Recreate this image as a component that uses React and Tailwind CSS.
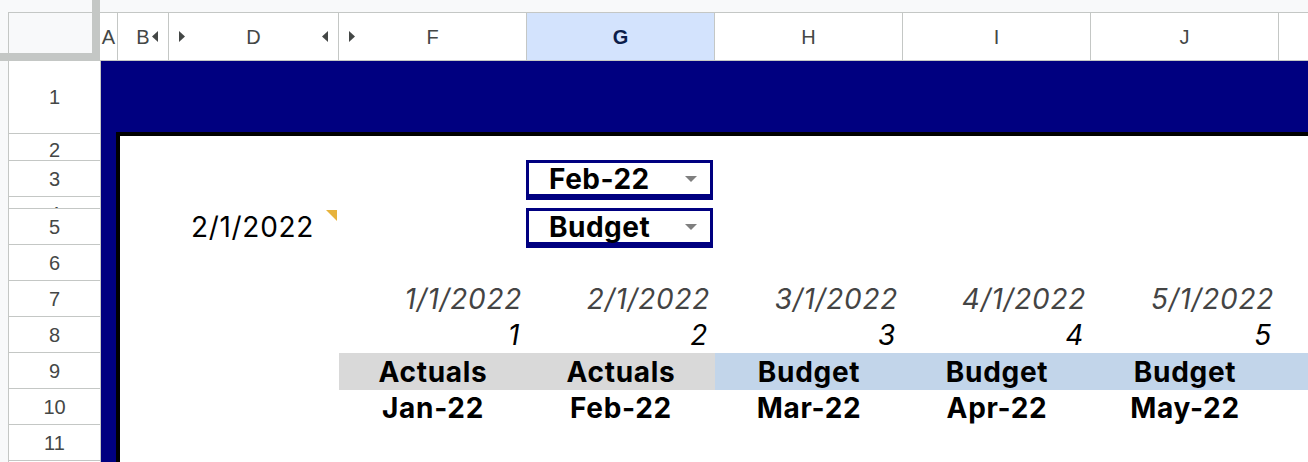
const cellFont = "font-['Inter','Noto_Sans',sans-serif]";
const headFont = "font-['Liberation_Sans',Arial,sans-serif]";

const colHeads = [
  { label: "A", w: "w-[18px]" },
  { label: "B", w: "w-[51px]", right: true },
  { label: "D", w: "w-[170px]", left: true, right: true },
  { label: "F", w: "w-[188px]", left: true },
  { label: "G", w: "w-[188px]", active: true },
  { label: "H", w: "w-[188px]" },
  { label: "I", w: "w-[188px]" },
  { label: "J", w: "w-[188px]" },
  { label: "", w: "w-[200px]" },
];

const rowHeads = [
  { label: "1", h: "h-[73px]" },
  { label: "2", h: "h-[27px]", pad: "pt-[6px]" },
  { label: "3", h: "h-[36px]" },
  { label: "4", h: "h-[12px]", clip: true },
  { label: "5", h: "h-[36px]" },
  { label: "6", h: "h-[36px]" },
  { label: "7", h: "h-[36px]" },
  { label: "8", h: "h-[36px]" },
  { label: "9", h: "h-[36px]" },
  { label: "10", h: "h-[36px]" },
  { label: "11", h: "h-[36px]" },
];

const months = [
  { date: "1/1/2022", n: 1, kind: "Actuals", mon: "Jan-22", bg: "bg-[#d9d9d9]" },
  { date: "2/1/2022", n: 2, kind: "Actuals", mon: "Feb-22", bg: "bg-[#d9d9d9]" },
  { date: "3/1/2022", n: 3, kind: "Budget", mon: "Mar-22", bg: "bg-[#c2d5ea]" },
  { date: "4/1/2022", n: 4, kind: "Budget", mon: "Apr-22", bg: "bg-[#c2d5ea]" },
  { date: "5/1/2022", n: 5, kind: "Budget", mon: "May-22", bg: "bg-[#c2d5ea]" },
];

function ArrowLeft({ className }) {
  return (
    <svg width="6" height="11" viewBox="0 0 6 11" className={className}>
      <polygon points="6,0 6,11 0,5.5" fill="#444746" />
    </svg>
  );
}

function ArrowRight({ className }) {
  return (
    <svg width="6" height="11" viewBox="0 0 6 11" className={className}>
      <polygon points="0,0 0,11 6,5.5" fill="#444746" />
    </svg>
  );
}

function Dropdown({ value }) {
  return (
    <div className="-mt-[1px] -ml-[1px] flex h-[40px] w-[187px] items-center border-x-[3px] border-t-[3px] border-b-[6px] border-[#000080] bg-white pl-[20px] pr-[13px]">
      <span className="text-[28px] font-bold leading-none tracking-[0.5px] text-black">{value}</span>
      <svg width="12" height="6" viewBox="0 0 12 6" className="ml-auto">
        <polygon points="0,0 12,0 6,6" fill="#7f7f7f" />
      </svg>
    </div>
  );
}

// widths of the visible columns inside the framed area: B (partial), D, F, G, H, I, J, K
const W = ["w-[49px]", "w-[170px]", "w-[188px]", "w-[188px]", "w-[188px]", "w-[188px]", "w-[188px]", "w-[200px]"];

function Row({ h, children }) {
  return <div className={`flex shrink-0 ${h}`}>{children}</div>;
}

export default function App() {
  return (
    <div className="h-[462px] w-[1308px] overflow-hidden bg-white">
      {/* top strip */}
      <div className="flex h-[13px]">
        <div className="w-[8px] bg-[#f8f9fa]" />
        <div className="w-[84px] border-b border-[#c4c7c5] bg-[#f8f9fa]" />
        <div className="w-[8px] bg-[#c4c7c5]" />
        <div className="flex-1 border-b border-[#c4c7c5] bg-[#f8f9fa]" />
      </div>

      {/* column headers */}
      <div className={`flex h-[48px] ${headFont}`}>
        <div className="flex w-[100px] shrink-0 flex-col">
          <div className="flex h-[40px]">
            <div className="w-[8px] bg-[#f8f9fa]" />
            <div className="w-[84px] border-l border-[#c4c7c5] bg-[#f8f9fa]" />
            <div className="w-[8px] bg-[#c4c7c5]" />
          </div>
          <div className="h-[8px] bg-[#c4c7c5]" />
        </div>
        {colHeads.map((c, i) => (
          <div
            key={i}
            className={`relative flex shrink-0 items-center justify-center border-r border-b border-[#c4c7c5] text-[20px] ${c.w} ${
              c.active ? "bg-[#d3e3fd] font-bold text-[#0b1d4a]" : "bg-white text-[#444746]"
            }`}
          >
            {c.label}
            {c.right && <ArrowLeft className="absolute right-[10px] top-[18px]" />}
            {c.left && <ArrowRight className="absolute left-[10px] top-[18px]" />}
          </div>
        ))}
      </div>

      {/* body */}
      <div className="flex h-[401px]">
        <div className="w-[8px] shrink-0 bg-[#f8f9fa]" />
        <div className={`flex w-[93px] shrink-0 flex-col border-x border-[#c4c7c5] bg-white ${headFont}`}>
          {rowHeads.map((r) => (
            <div
              key={r.label}
              className={`flex shrink-0 justify-center overflow-hidden border-b border-[#c4c7c5] text-[20px] text-[#444746] ${r.h} ${
                r.clip ? "items-start pt-[7px] leading-none" : "items-center"
              } ${r.pad || ""}`}
            >
              {r.label}
            </div>
          ))}
        </div>

        <div className="flex-1 bg-[#000080] pl-[15px] pt-[71px]">
          <div className={`flex h-full flex-col border-l-4 border-t-4 border-black bg-white text-[28px] tracking-[0.7px] ${cellFont}`}>
            {/* row 2 */}
            <Row h="h-[25px]" />
            {/* row 3 */}
            <Row h="h-[36px]">
              <div className={W[0]} />
              <div className={W[1]} />
              <div className={W[2]} />
              <div className={W[3]}>
                <Dropdown value="Feb-22" />
              </div>
            </Row>
            {/* row 4 */}
            <Row h="h-[12px]" />
            {/* row 5 */}
            <Row h="h-[36px]">
              <div className={W[0]} />
              <div className={`relative flex items-center justify-center pr-[3px] text-black ${W[1]}`}>
                2/1/2022
                <svg width="11" height="11" viewBox="0 0 11 11" className="absolute right-[2px] top-[1px]">
                  <polygon points="0,0 11,0 11,11" fill="#e7b33c" />
                </svg>
              </div>
              <div className={W[2]} />
              <div className={W[3]}>
                <Dropdown value="Budget" />
              </div>
            </Row>
            {/* row 6 */}
            <Row h="h-[36px]" />
            {/* row 7 */}
            <Row h="h-[36px]">
              <div className={W[0]} />
              <div className={W[1]} />
              {months.map((m, i) => (
                <div key={m.date} className={`flex shrink-0 items-center justify-end pr-[5px] italic text-[#444444] ${W[i + 2]}`}>
                  {m.date}
                </div>
              ))}
            </Row>
            {/* row 8 */}
            <Row h="h-[36px]">
              <div className={W[0]} />
              <div className={W[1]} />
              {months.map((m, i) => (
                <div key={m.n} className={`flex shrink-0 items-center justify-end pr-[7px] italic text-black ${W[i + 2]}`}>
                  {m.n}
                </div>
              ))}
            </Row>
            {/* row 9 */}
            <Row h="h-[37px]">
              <div className={W[0]} />
              <div className={`${W[1]} pr-0`} />
              {months.map((m, i) => (
                <div key={m.mon} className={`flex shrink-0 items-center justify-center font-bold text-black ${m.bg} ${W[i + 2]}`}>
                  {m.kind}
                </div>
              ))}
              <div className="flex-1 bg-[#c2d5ea]" />
            </Row>
            {/* row 10 */}
            <Row h="h-[36px]">
              <div className={W[0]} />
              <div className={W[1]} />
              {months.map((m, i) => (
                <div key={m.mon} className={`flex shrink-0 items-center justify-center font-bold text-black ${W[i + 2]}`}>
                  {m.mon}
                </div>
              ))}
            </Row>
            {/* row 11 */}
            <Row h="h-[36px]" />
          </div>
        </div>
      </div>
    </div>
  );
}
